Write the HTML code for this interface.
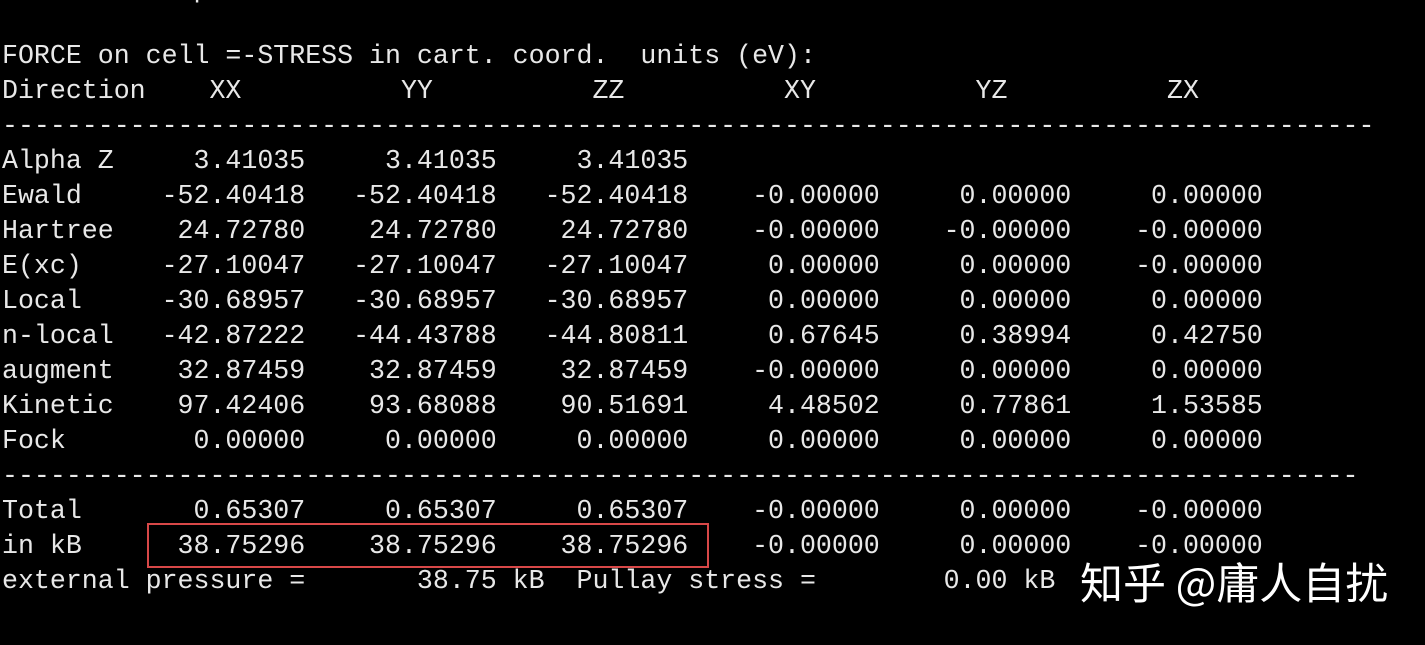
<!DOCTYPE html>
<html><head><meta charset="utf-8"><style>
html,body{margin:0;padding:0;background:#000;width:1425px;height:645px;overflow:hidden;position:relative}
pre{position:absolute;left:2px;top:39px;margin:0;font-family:"Liberation Mono",monospace;font-size:26.6px;line-height:35px;color:#e8e8e8;letter-spacing:0}
pre.top{top:-27px}
.box{position:absolute;left:147px;top:523px;width:558px;height:41px;border:2px solid #d84848}
.wm{position:absolute;left:1080px;top:554px;font-family:"Noto Sans CJK SC","WenQuanYi Zen Hei",sans-serif;font-size:43px;color:#fff;line-height:54px;white-space:nowrap}
</style></head><body>
<pre class="top">            p</pre>
<pre>FORCE on cell =-STRESS in cart. coord.  units (eV):
Direction    XX          YY          ZZ          XY          YZ          ZX
--------------------------------------------------------------------------------------
Alpha Z     3.41035     3.41035     3.41035
Ewald     -52.40418   -52.40418   -52.40418    -0.00000     0.00000     0.00000
Hartree    24.72780    24.72780    24.72780    -0.00000    -0.00000    -0.00000
E(xc)     -27.10047   -27.10047   -27.10047     0.00000     0.00000    -0.00000
Local     -30.68957   -30.68957   -30.68957     0.00000     0.00000     0.00000
n-local   -42.87222   -44.43788   -44.80811     0.67645     0.38994     0.42750
augment    32.87459    32.87459    32.87459    -0.00000     0.00000     0.00000
Kinetic    97.42406    93.68088    90.51691     4.48502     0.77861     1.53585
Fock        0.00000     0.00000     0.00000     0.00000     0.00000     0.00000
-------------------------------------------------------------------------------------
Total       0.65307     0.65307     0.65307    -0.00000     0.00000    -0.00000
in kB      38.75296    38.75296    38.75296    -0.00000     0.00000    -0.00000
external pressure =       38.75 kB  Pullay stress =        0.00 kB</pre>
<div class="box"></div>
<div class="wm">知乎 @庸人自扰</div>
</body></html>
